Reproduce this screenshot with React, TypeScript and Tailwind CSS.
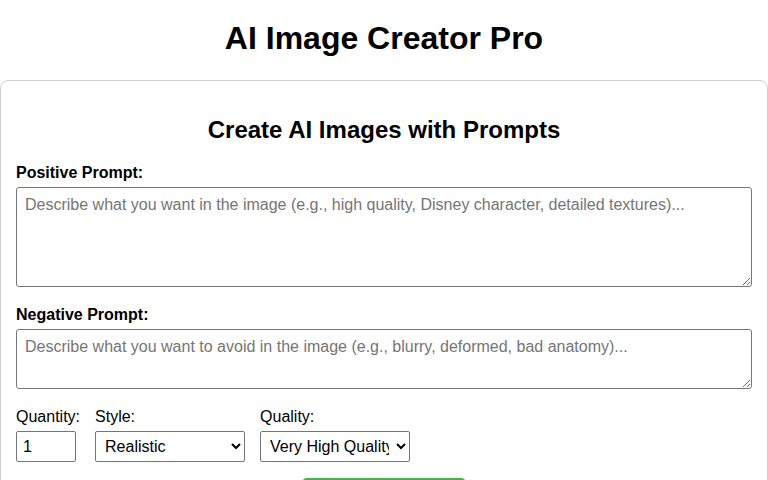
export default function App() {
  return (
    <div className="bg-white text-black font-['Liberation_Sans',Arial,sans-serif] text-base h-[480px] overflow-hidden">
      <h1 className="text-[32px] leading-[37px] font-bold text-center pt-[20px] pb-[23px]">AI Image Creator Pro</h1>
      <div className="border border-[#d0d0d0] rounded-[8px] px-[15px] pt-[15px] pb-[20px] h-[600px]">
        <h2 className="text-[24px] leading-[28px] font-bold text-center mt-[20px] mb-[20px]">Create AI Images with Prompts</h2>
        <label className="block font-bold leading-[18px] mb-[5px]">Positive Prompt:</label>
        <textarea
          className="block w-full h-[100px] border border-[#767676] rounded-[3px] px-[8px] py-[8px] leading-[18px] placeholder:text-[#757575] mb-[19px]"
          placeholder="Describe what you want in the image (e.g., high quality, Disney character, detailed textures)..."
        />
        <label className="block font-bold leading-[18px] mb-[5px]">Negative Prompt:</label>
        <textarea
          className="block w-full h-[60px] border border-[#767676] rounded-[3px] px-[8px] py-[8px] leading-[18px] placeholder:text-[#757575] mb-[19px]"
          placeholder="Describe what you want to avoid in the image (e.g., blurry, deformed, bad anatomy)..."
        />
        <div className="flex gap-[15px] items-start">
          <div className="flex flex-col">
            <label className="leading-[18px] mb-[5px]">Quantity:</label>
            <input
              type="number"
              defaultValue={1}
              className="w-[60px] h-[31px] border border-[#767676] rounded-[2px] px-[6px] bg-white [appearance:textfield] [&::-webkit-inner-spin-button]:appearance-none"
            />
          </div>
          <div className="flex flex-col">
            <label className="leading-[18px] mb-[5px]">Style:</label>
            <select className="w-[150px] h-[31px] border border-[#767676] rounded-[2px] pl-[5px] pr-[4px] bg-white">
              <option>Realistic</option>
              <option>Cartoon</option>
              <option>Anime</option>
            </select>
          </div>
          <div className="flex flex-col">
            <label className="leading-[18px] mb-[5px]">Quality:</label>
            <select className="w-[150px] h-[31px] border border-[#767676] rounded-[2px] pl-[5px] pr-[4px] bg-white">
              <option>Very High Quality</option>
              <option>High Quality</option>
            </select>
          </div>
        </div>
        <div className="flex justify-center mt-[16px]">
          <button className="w-[164px] h-[40px] bg-[#4caf50] text-white rounded-[5px] font-bold">Generate Images</button>
        </div>
      </div>
    </div>
  );
}
